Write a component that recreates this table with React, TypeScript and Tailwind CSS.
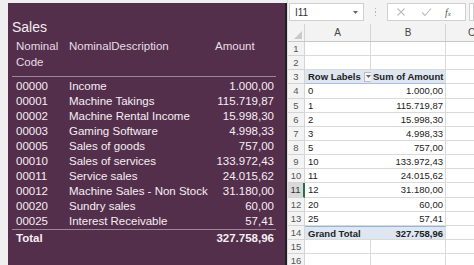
import React from "react";

const sales = [
  ["00000", "Income", "1.000,00"],
  ["00001", "Machine Takings", "115.719,87"],
  ["00002", "Machine Rental Income", "15.998,30"],
  ["00003", "Gaming Software", "4.998,33"],
  ["00005", "Sales of goods", "757,00"],
  ["00010", "Sales of services", "133.972,43"],
  ["00011", "Service sales", "24.015,62"],
  ["00012", "Machine Sales - Non Stock", "31.180,00"],
  ["00020", "Sundry sales", "60,00"],
  ["00025", "Interest Receivable", "57,41"],
];

const pivot = [
  ["0", "1.000,00"],
  ["1", "115.719,87"],
  ["2", "15.998,30"],
  ["3", "4.998,33"],
  ["5", "757,00"],
  ["10", "133.972,43"],
  ["11", "24.015,62"],
  ["12", "31.180,00"],
  ["20", "60,00"],
  ["25", "57,41"],
];

const SalesPanel = () => {
  return (
    <div className="w-[279px] mt-[3px] bg-[#542f4c] border-r-2 border-[#2e1a2a] text-[11.5px] text-[#f4eef3] pt-[16px] pl-[4px] pr-[9px]">
      <div className="text-[14px] leading-[16px] text-[#f2ecf1]">Sales</div>
      {/* header */}
      <div className="flex mt-[4px] h-[38px] text-[#e6dde4] leading-[15.5px] border-b border-[#9c8697] pl-[4px]">
        <div className="w-[53px]">
          <div>Nominal</div>
          <div>Code</div>
        </div>
        <div className="w-[146px]">NominalDescription</div>
        <div>Amount</div>
      </div>
      {/* rows */}
      <div className="pt-[1.5px]">
        {sales.map(([code, desc, amt]) => (
          <div key={code} className="flex leading-[15.1px] pl-[4px] pr-[2px] whitespace-nowrap">
            <div className="w-[53px]">{code}</div>
            <div className="flex-1">{desc}</div>
            <div className="text-right">{amt}</div>
          </div>
        ))}
      </div>
      <div className="flex font-bold leading-[15px] border-t border-[#9c8697] pl-[4px] pr-[2px] pt-[1px]">
        <div className="flex-1">Total</div>
        <div className="text-right">327.758,96</div>
      </div>
    </div>
  );
};

const RowNum = ({ n }: { n: number }) => {
  const sel = n === 11;
  return (
    <div
      className={
        sel
          ? "w-[17px] shrink-0 border-b border-r-2 border-b-[#d4d4d4] border-r-[#217346] bg-[#d9d9d9] text-[#333] text-center text-[9.5px]"
          : "w-[17px] shrink-0 border-b border-r border-[#d4d4d4] bg-[#f3f3f3] text-[#555] text-center text-[9.5px]"
      }
    >
      {n}
    </div>
  );
};

const Excel = () => {
  const rows: React.ReactNode[] = [];
  for (let n = 1; n <= 16; n++) {
    let a: React.ReactNode = null;
    let b: React.ReactNode = null;
    let ab = "border-b border-r border-[#dadada]";
    let aa = "border-b border-r border-[#dadada]";
    if (n === 3) {
      aa = "bg-[#dde6f1] border-b border-[#a9bfdc] font-bold flex items-center";
      ab = "bg-[#dde6f1] border-b border-r border-b-[#a9bfdc] border-r-[#dadada] font-bold";
      a = (
        <>
          <span>Row Labels</span>
          <span className="ml-[3px] w-[9px] h-[10px] shrink-0 bg-[#f4f4f4] border border-[#bdbdbd] flex items-center justify-center">
            <svg width="5" height="3" viewBox="0 0 5 3">
              <path d="M0 0 L5 0 L2.5 3 Z" fill="#666" />
            </svg>
          </span>
        </>
      );
      b = "Sum of Amount";
    } else if (n >= 4 && n <= 13) {
      aa = "border-b border-[#dadada]";
      a = pivot[n - 4][0];
      b = pivot[n - 4][1];
    } else if (n === 14) {
      aa = "bg-[#dde6f1] border-t border-b border-t-[#95b3d7] border-b-[#dadada] font-bold";
      ab = "bg-[#dde6f1] border-t border-b border-r border-t-[#95b3d7] border-b-[#dadada] border-r-[#dadada] font-bold";
      a = "Grand Total";
      b = "327.758,96";
    }
    rows.push(
      <div key={n} className="flex h-[14.15px] leading-[13px] whitespace-nowrap">
        <RowNum n={n} />
        <div className={"w-[66px] shrink-0 pl-[3px] overflow-hidden " + aa}>{a}</div>
        <div
          className={
            "w-[75px] shrink-0 pr-[2px] overflow-hidden " + ab + (n === 3 ? " text-left pl-[2px]" : " text-right")
          }
        >
          {b}
        </div>
        <div className="flex-1 border-b border-[#dadada]"></div>
      </div>
    );
  }

  return (
    <div
      className="flex-1 bg-white border-l border-[#cfe3d8] text-[9.5px] text-[#222] overflow-hidden"
      style={{ fontFamily: '"Liberation Sans", Arial, sans-serif' }}
    >
      {/* formula bar */}
      <div className="h-[24px] bg-[#f3f3f3] flex items-start pt-[3px] pl-[1px]">
        <div className="w-[75px] h-[18px] bg-white border border-[#d0d0d0] flex items-center pl-[5px] pr-[5px] text-[10px] text-[#333]">
          <span className="flex-1">I11</span>
          <svg width="5" height="3" viewBox="0 0 5 3">
            <path d="M0 0 L5 0 L2.5 3 Z" fill="#666" />
          </svg>
        </div>
        <div className="w-[23px] h-[18px] flex flex-col items-center justify-center gap-[2px]">
          <span className="w-[1.5px] h-[1.5px] bg-[#b5b5b5]"></span>
          <span className="w-[1.5px] h-[1.5px] bg-[#b5b5b5]"></span>
          <span className="w-[1.5px] h-[1.5px] bg-[#b5b5b5]"></span>
        </div>
        <div className="w-[79px] h-[18px] bg-white border border-[#d0d0d0] flex items-center">
          <svg width="10" height="10" viewBox="0 0 10 10" className="ml-[8px]">
            <path d="M1.5 1.5 L8.5 8.5 M8.5 1.5 L1.5 8.5" stroke="#bdbdbd" strokeWidth="1.1" />
          </svg>
          <svg width="11" height="10" viewBox="0 0 11 10" className="ml-[15px]">
            <path d="M1 5.5 L4 8.5 L10 1.5" stroke="#bdbdbd" strokeWidth="1.1" fill="none" />
          </svg>
          <span className="ml-[13px] text-[10px] italic text-[#555]" style={{ fontFamily: '"Liberation Serif", serif' }}>
            f<span className="text-[7px]">x</span>
          </span>
        </div>
        <div className="flex-1 h-[18px] bg-white border border-[#d0d0d0] ml-[3px]"></div>
      </div>
      {/* column headers */}
      <div className="flex h-[18px] bg-[#f3f3f3] border-b border-[#c8c8c8] text-[10px] text-[#444]">
        <div className="w-[17px] shrink-0 border-r border-[#d4d4d4] relative">
          <svg width="8" height="8" viewBox="0 0 8 8" className="absolute right-[2px] bottom-[2px]">
            <path d="M8 0 L8 8 L0 8 Z" fill="#c9c9c9" />
          </svg>
        </div>
        <div className="w-[66px] shrink-0 border-r border-[#d4d4d4] flex items-center justify-center">A</div>
        <div className="w-[75px] shrink-0 border-r border-[#d4d4d4] flex items-center justify-center">B</div>
        <div className="flex-1 flex items-center pl-[22px]">C</div>
      </div>
      {rows}
    </div>
  );
}

export default function App() {
  return (
    <div
      className="w-[474px] h-[265px] bg-[#efefef] flex overflow-hidden"
      style={{ fontFamily: '"Liberation Sans", Arial, sans-serif' }}
    >
      <div className="w-[8px] shrink-0"></div>
      <SalesPanel />
      <Excel />
    </div>
  );
}
